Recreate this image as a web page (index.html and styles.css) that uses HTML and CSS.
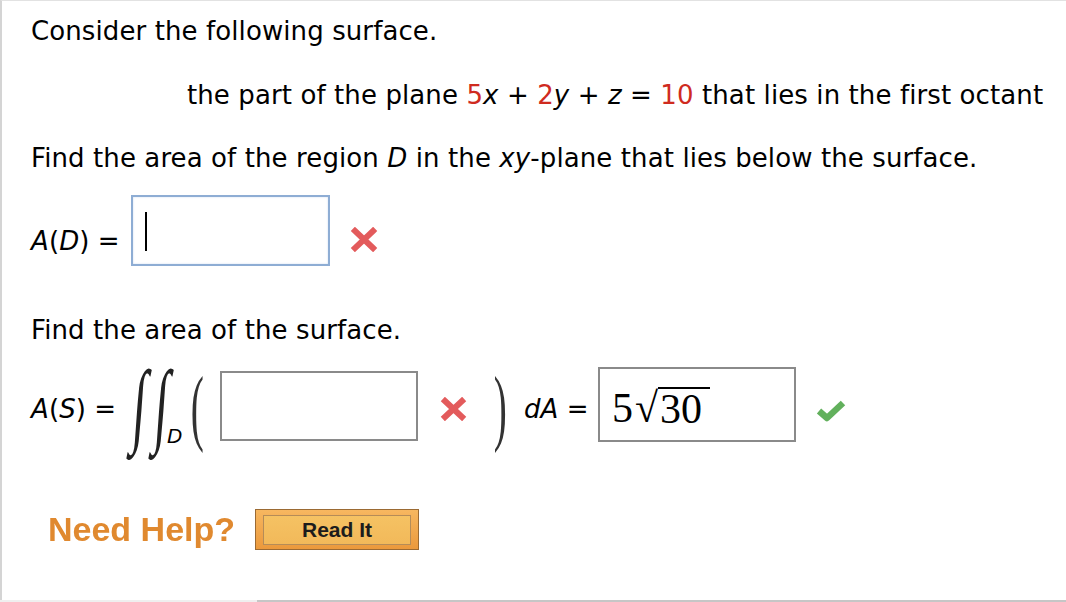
FILE: index.html
```html
<!DOCTYPE html>
<html>
<head>
<meta charset="utf-8">
<link rel="stylesheet" href="styles.css">
</head>
<body>
<div class="page">
  <p class="line l1">Consider the following surface.</p>
  <p class="line l2">the part of the plane <span class="red">5</span><i>x</i> + <span class="red">2</span><i>y</i> + <i>z</i> = <span class="red">10</span> that lies in the first octant</p>
  <p class="line l3">Find the area of the region <i>D</i> in the <i>xy</i>-plane that lies below the surface.</p>
  <div class="row row-ad">
    <span class="lbl lbl-ad"><i>A</i>(<i>D</i>) =</span>
    <div class="box box-focus"><span class="caret"></span></div>
    <svg class="xmark x1" width="28" height="25" viewBox="0 0 28 25"><path d="M5 4 L23 21 M23 4 L5 21" stroke="#e35b5c" stroke-width="6" stroke-linecap="square" fill="none"/></svg>
  </div>
  <p class="line l4">Find the area of the surface.</p>
  <div class="row row-as">
    <span class="lbl lbl-as"><i>A</i>(<i>S</i>) =</span>
    <span class="ints"><span class="int">∫</span><span class="int int2">∫</span><i class="sub">D</i></span>
    <span class="paren lp">(</span>
    <div class="box box-plain box2"></div>
    <svg class="xmark x2" width="27" height="24" viewBox="0 0 27 24"><path d="M5 4 L22 20 M22 4 L5 20" stroke="#e35b5c" stroke-width="6" stroke-linecap="square" fill="none"/></svg>
    <span class="paren rp">)</span>
    <span class="lbl lbl-da"><i>dA</i> =</span>
    <div class="box box-plain box3"><span class="ans">5<span class="rad">√</span><span class="vinc">30</span></span></div>
    <svg class="check" width="30" height="24" viewBox="0 0 30 24"><path d="M3 12 L11 19 L27 4" stroke="#62b05c" stroke-width="6.5" stroke-linejoin="round" fill="none"/></svg>
  </div>
  <div class="help">
    <span class="need">Need Help?</span>
    <span class="btn"><span class="btn-in">Read It</span></span>
  </div>
</div>
<div class="footer"><div class="f1"></div><div class="f2"></div></div>
</body>
</html>
```
FILE: styles.css
```css
html, body {
  margin: 0;
  padding: 0;
  background: #fff;
}
body {
  width: 1066px;
  height: 602px;
  overflow: hidden;
}
.page {
  box-sizing: border-box;
  height: 600px;
  border-top: 1px solid #e2e2e2;
  border-left: 2px solid #d4d4d4;
  padding-left: 29px;
  font-family: "DejaVu Sans", Verdana, sans-serif;
  font-size: 26px;
  letter-spacing: 0.1px;
  color: #000;
}
.line {
  margin: 0;
  line-height: 32px;
  white-space: nowrap;
}
.l1 { margin-top: 14px; }
.l2 { margin-top: 32px; padding-left: 156px; }
.l3 { margin-top: 31px; }
.l4 { margin-top: 48px; }
.red { color: #cf2b1f; }

.row {
  display: flex;
  align-items: flex-start;
  white-space: nowrap;
}
.row-ad { margin-top: 21px; height: 71px; }
.row-as { margin-top: 21px; height: 81px; }

.lbl {
  display: inline-block;
  line-height: 32px;
}
.lbl-ad { width: 100px; margin-top: 30px; }
.lbl-as { width: 94px; margin-top: 26px; }
.lbl-da { width: 74px; margin-top: 26px; margin-left: 15px; }

.box {
  box-sizing: border-box;
  background: #fff;
}
.box-focus {
  width: 199px;
  height: 71px;
  border: 2px solid #8eadd4;
  box-shadow: inset 0 0 2px #c9d9ee;
  position: relative;
}
.caret {
  position: absolute;
  left: 12px;
  top: 15px;
  width: 2px;
  height: 39px;
  background: #000;
}
.box-plain {
  border: 2px solid #8a8a8a;
}
.box2 { width: 198px; height: 70px; margin-top: 4px; margin-left: 14px; }
.box3 { width: 198px; height: 75px; display: flex; align-items: center; padding-left: 12px; padding-top: 7px; }

.xmark { filter: blur(0.4px); }
.x1 { margin-left: 20px; margin-top: 32px; }
.x2 { margin-left: 22px; margin-top: 30px; }
.check { margin-left: 20px; margin-top: 32px; filter: blur(0.3px); }

.ints {
  display: inline-flex;
  position: relative;
  box-sizing: border-box;
  width: 55px;
  height: 81px;
  padding-left: 6px;
  font-family: "Liberation Serif", serif;
  font-size: 62px;
  line-height: 76px;
}
.int {
  display: inline-block;
  transform: scale(0.8, 1.5) skewX(-8deg);
  transform-origin: center;
  color: #222;
}
.int2 { margin-left: 5px; }
.sub {
  position: absolute;
  left: 42px;
  top: 59px;
  font-family: "DejaVu Sans", Verdana, sans-serif;
  font-size: 20px;
  line-height: 20px;
}
.paren {
  display: inline-block;
  width: 18px;
  text-align: center;
  font-family: "Liberation Serif", serif;
  font-size: 56px;
  line-height: 81px;
  transform: scale(0.7, 1.5);
  color: #333;
}
.lp { margin-left: 8px; }
.rp { margin-left: 24px; }

.ans {
  font-family: "Liberation Serif", serif;
  font-size: 42px;
  line-height: 42px;
  letter-spacing: 0;
  display: inline-flex;
  align-items: flex-end;
}
.rad { font-size: 42px; margin-left: 2px; }
.vinc {
  border-top: 2px solid #000;
  padding-left: 2px;
  padding-right: 8px;
  line-height: 40px;
}

.help {
  display: flex;
  align-items: center;
  margin-top: 61px;
  height: 41px;
  padding-left: 17px;
}
.need {
  width: 207px;
  font-family: "Liberation Sans", Arial, sans-serif;
  font-weight: bold;
  font-size: 34px;
  letter-spacing: 0;
  color: #e0892f;
  filter: blur(0.5px);
}
.btn {
  box-sizing: border-box;
  width: 164px;
  height: 41px;
  border: 1px solid #9b6a33;
  background: linear-gradient(#f7b760, #eb993c);
  padding: 5px 7px 4px 7px;
  display: flex;
}
.btn-in {
  box-sizing: border-box;
  flex: 1;
  border: 1px solid #b58c58;
  background: linear-gradient(#f5c263, #f2b95a);
  font-family: "Liberation Sans", Arial, sans-serif;
  font-weight: bold;
  font-size: 21px;
  letter-spacing: 0;
  line-height: 28px;
  text-align: center;
  color: #1c1c1c;
}

.footer {
  display: flex;
  height: 2px;
}
.f1 { width: 257px; background: #efefef; }
.f2 { flex: 1; background: #c6c6c6; }
```
